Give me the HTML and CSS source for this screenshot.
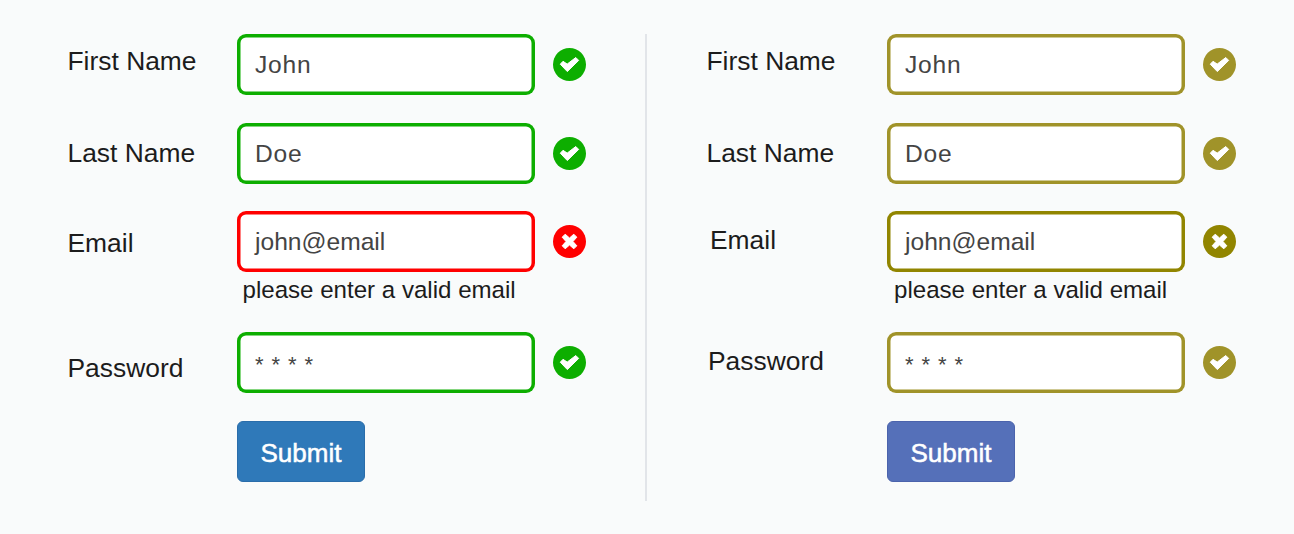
FILE: index.html
```
<!DOCTYPE html>
<html lang="en">
  <head>
    <meta charset="UTF-8" />
    <meta name="viewport" content="width=device-width, initial-scale=1.0" />
    <title>Form Validation</title>
    <link rel="stylesheet" href="styles.css">
  </head>
  <body>
    <svg width="0" height="0" class="sprite">
      <symbol id="ok" viewBox="0 0 33 33">
        <circle cx="16.5" cy="16.5" r="16.5" />
        <path class="mark" d="M7.3 16.2l2.7-2.9 4.2 2.8 8.6-6.6 2.9 2.9-11.4 11.2z" />
      </symbol>
      <symbol id="remove" viewBox="0 0 33 33">
        <circle cx="16.5" cy="16.5" r="16.5" />
        <path class="mark" d="M12.2 9.2l4.3 3.8 4.3-3.8 3 3-3.8 4.3 3.8 4.3-3 3-4.3-3.8-4.3 3.8-3-3 3.8-4.3-3.8-4.3z" />
      </symbol>
    </svg>

    <div id="container">
      <form class="normal">
        <div class="row">
          <label class="first">First Name</label>
          <div class="field">John</div>
          <svg class="icon"><use href="#ok" /></svg>
        </div>
        <div class="row">
          <label class="last">Last Name</label>
          <div class="field">Doe</div>
          <svg class="icon"><use href="#ok" /></svg>
        </div>
        <div class="row invalid">
          <label class="email">Email</label>
          <div class="field">john@email</div>
          <svg class="icon"><use href="#remove" /></svg>
        </div>
        <p class="error">please enter a valid email</p>
        <div class="row">
          <label class="password">Password</label>
          <div class="field stars">* * * *</div>
          <svg class="icon"><use href="#ok" /></svg>
        </div>
        <button type="button">Submit</button>
      </form>

      <div class="divider"></div>

      <!-- same form as seen with red-green color blindness -->
      <form class="colorblind">
        <div class="row">
          <label class="first">First Name</label>
          <div class="field">John</div>
          <svg class="icon"><use href="#ok" /></svg>
        </div>
        <div class="row">
          <label class="last">Last Name</label>
          <div class="field">Doe</div>
          <svg class="icon"><use href="#ok" /></svg>
        </div>
        <div class="row invalid">
          <label class="email">Email</label>
          <div class="field">john@email</div>
          <svg class="icon"><use href="#remove" /></svg>
        </div>
        <p class="error">please enter a valid email</p>
        <div class="row">
          <label class="password">Password</label>
          <div class="field stars">* * * *</div>
          <svg class="icon"><use href="#ok" /></svg>
        </div>
        <button type="button">Submit</button>
      </form>
    </div>
  </body>
</html>
```
FILE: styles.css
```
* {
  box-sizing: border-box;
}
body {
  margin: 0;
  background-color: #f9fbfb;
  font-family: "Liberation Sans", Arial, sans-serif;
  color: #1c1c1c;
}
.sprite {
  display: block;
}
#container {
  display: flex;
  height: 534px;
  padding: 34px 0 0 67px;
}
form {
  width: 578px;
}
.colorblind {
  padding-left: 59px;
  width: 640px;
}
.divider {
  width: 2px;
  height: 467px;
  background-color: #e2e5e9;
}
.row {
  display: flex;
  align-items: center;
  height: 61px;
  margin-bottom: 27.5px;
  color: #0dae00;
}
label {
  width: 170px;
  padding-left: 0.5px;
  font-size: 26.4px;
  line-height: 30px;
  color: #1c1c1c;
}
.first {
  padding-bottom: 7px;
}
.email {
  padding-top: 3px;
}
.password {
  padding-top: 10px;
}
.colorblind label {
  width: 181px;
}
.colorblind .email {
  padding: 0 0 4px 4px;
}
.colorblind .password {
  padding: 0 0 4px 2px;
}
.field {
  width: 298px;
  height: 61px;
  padding-left: 18px;
  border-radius: 9px;
  background-color: white;
  box-shadow: inset 0 0 0 3.5px currentColor;
  font-size: 24.6px;
  line-height: 62px;
  letter-spacing: 0.8px;
  -webkit-text-fill-color: #444;
}
.invalid .field {
  letter-spacing: 0;
}
.stars {
  padding-top: 2px;
  font-size: 22px;
  letter-spacing: 0.9px;
}
.icon {
  width: 33px;
  height: 33px;
  margin-left: 18px;
  fill: currentColor;
}
.mark {
  fill: white;
  stroke: white;
  stroke-linejoin: round;
}
.invalid {
  margin-bottom: 0;
  color: #ff0000;
}
.error {
  height: 60px;
  margin: 0;
  padding: 4px 0 0 175.5px;
  font-size: 24.1px;
  line-height: 28px;
}
button {
  display: block;
  width: 128px;
  height: 61px;
  margin-left: 170px;
  padding: 4px 0 0;
  border: 1px solid #2a6daa;
  border-radius: 6px;
  background-color: #2f79b9;
  color: white;
  font-family: inherit;
  font-size: 26px;
  -webkit-text-stroke: 0.5px white;
}
.colorblind .row {
  color: #a09329;
}
.colorblind .invalid {
  color: #918500;
}
.colorblind .error {
  padding-left: 188px;
}
.colorblind button {
  margin-left: 181px;
  border-color: #4b63ac;
  background-color: #5570b9;
}
```
